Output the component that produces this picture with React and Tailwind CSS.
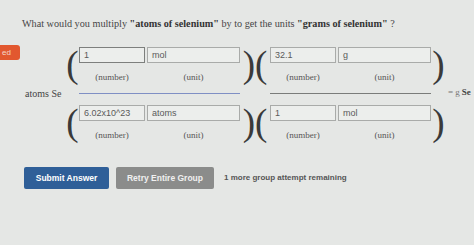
import React from "react";

const serif = { fontFamily: '"Liberation Serif", "Times New Roman", serif' };

function Box({ value, width, dark }) {
  return (
    <div
      className={`h-[16px] ${width} border ${dark ? "border-[#7d7f7d]" : "border-[#a9aba9]"} bg-[#eceeec] pl-[4px] pt-[2px] text-[9px] leading-[10px] text-[#5a5a5a]`}
      style={{ fontFamily: '"Liberation Sans", Arial, sans-serif' }}
    >
      {value}
    </div>
  );
}

function Half({ num, unit, dark }) {
  return (
    <div className="flex flex-col">
      <div className="flex gap-[2px]">
        <Box value={num} width="w-[66px]" dark={dark} />
        <Box value={unit} width="w-[93px]" />
      </div>
      <div className="mt-[9px] flex text-[9px] leading-[11px] text-[#555]" style={serif}>
        <div className="w-[66px] text-center">(number)</div>
        <div className="ml-[2px] w-[93px] text-center">(unit)</div>
      </div>
    </div>
  );
}

function Paren({ ch }) {
  return (
    <div
      className="flex h-full items-center justify-center text-[37px] leading-none text-[#3a3a3a]"
      style={serif}
    >
      {ch}
    </div>
  );
}

export default function App() {
  return (
    <div className="relative h-[245px] w-[474px] overflow-hidden bg-[#e5e7e5]">
      <div
        className="absolute left-0 top-[45px] flex h-[15px] w-[20px] items-center rounded-r-[3px] bg-[#e2582f] pl-[2px] text-[8px] text-[#f4d6c8]"
        style={{ fontFamily: '"Liberation Sans", Arial, sans-serif' }}
      >
        ed
      </div>

      <p className="pl-[22px] pt-[17px] text-[10.2px] leading-[14px] text-[#454545]" style={serif}>
        What would you multiply <b className="text-[#333]">"atoms of selenium"</b> by to get the units{" "}
        <b className="text-[#333]">"grams of selenium"</b> ?
      </p>

      <div className="ml-[22px] mt-[16px] grid grid-cols-[44px_13px_161px_30px_161px_15px_1fr] grid-rows-[35px_22px_36px]">
        <div className="col-start-2 row-start-1"><Paren ch="(" /></div>
        <div className="col-start-3 row-start-1"><Half num="1" unit="mol" dark /></div>
        <div className="col-start-4 row-start-1"><Paren ch=")(" /></div>
        <div className="col-start-5 row-start-1"><Half num="32.1" unit="g" /></div>
        <div className="col-start-6 row-start-1"><Paren ch=")" /></div>

        <div className="col-start-1 row-start-2 flex items-center pl-[3px] text-[10px] text-[#444]" style={serif}>
          atoms Se
        </div>
        <div className="col-start-3 row-start-2 flex items-center">
          <div className="h-[1px] w-[161px] bg-[#7f8fc4]" />
        </div>
        <div className="col-start-5 row-start-2 flex items-center">
          <div className="h-[1px] w-[161px] bg-[#7a7c7a]" />
        </div>
        <div className="col-start-7 row-start-2 flex items-center pl-[2px] text-[9px] text-[#777]" style={serif}>
          = g <b className="ml-[2px] text-[#444]">Se</b>
        </div>

        <div className="col-start-2 row-start-3"><Paren ch="(" /></div>
        <div className="col-start-3 row-start-3 pt-[1px]"><Half num="6.02x10^23" unit="atoms" /></div>
        <div className="col-start-4 row-start-3"><Paren ch=")(" /></div>
        <div className="col-start-5 row-start-3 pt-[1px]"><Half num="1" unit="mol" /></div>
        <div className="col-start-6 row-start-3"><Paren ch=")" /></div>
      </div>

      <div
        className="ml-[24px] mt-[27px] flex items-center"
        style={{ fontFamily: '"Liberation Sans", Arial, sans-serif' }}
      >
        <button className="h-[22px] w-[85px] rounded-[2px] bg-[#2f5f98] text-[8.5px] font-bold text-white">
          Submit Answer
        </button>
        <button className="ml-[7px] h-[22px] w-[98px] rounded-[2px] bg-[#8b8c8b] text-[8.5px] font-bold text-[#f0f0f0]">
          Retry Entire Group
        </button>
        <span className="ml-[10px] text-[8px] font-bold text-[#555]">1 more group attempt remaining</span>
      </div>
    </div>
  );
}
